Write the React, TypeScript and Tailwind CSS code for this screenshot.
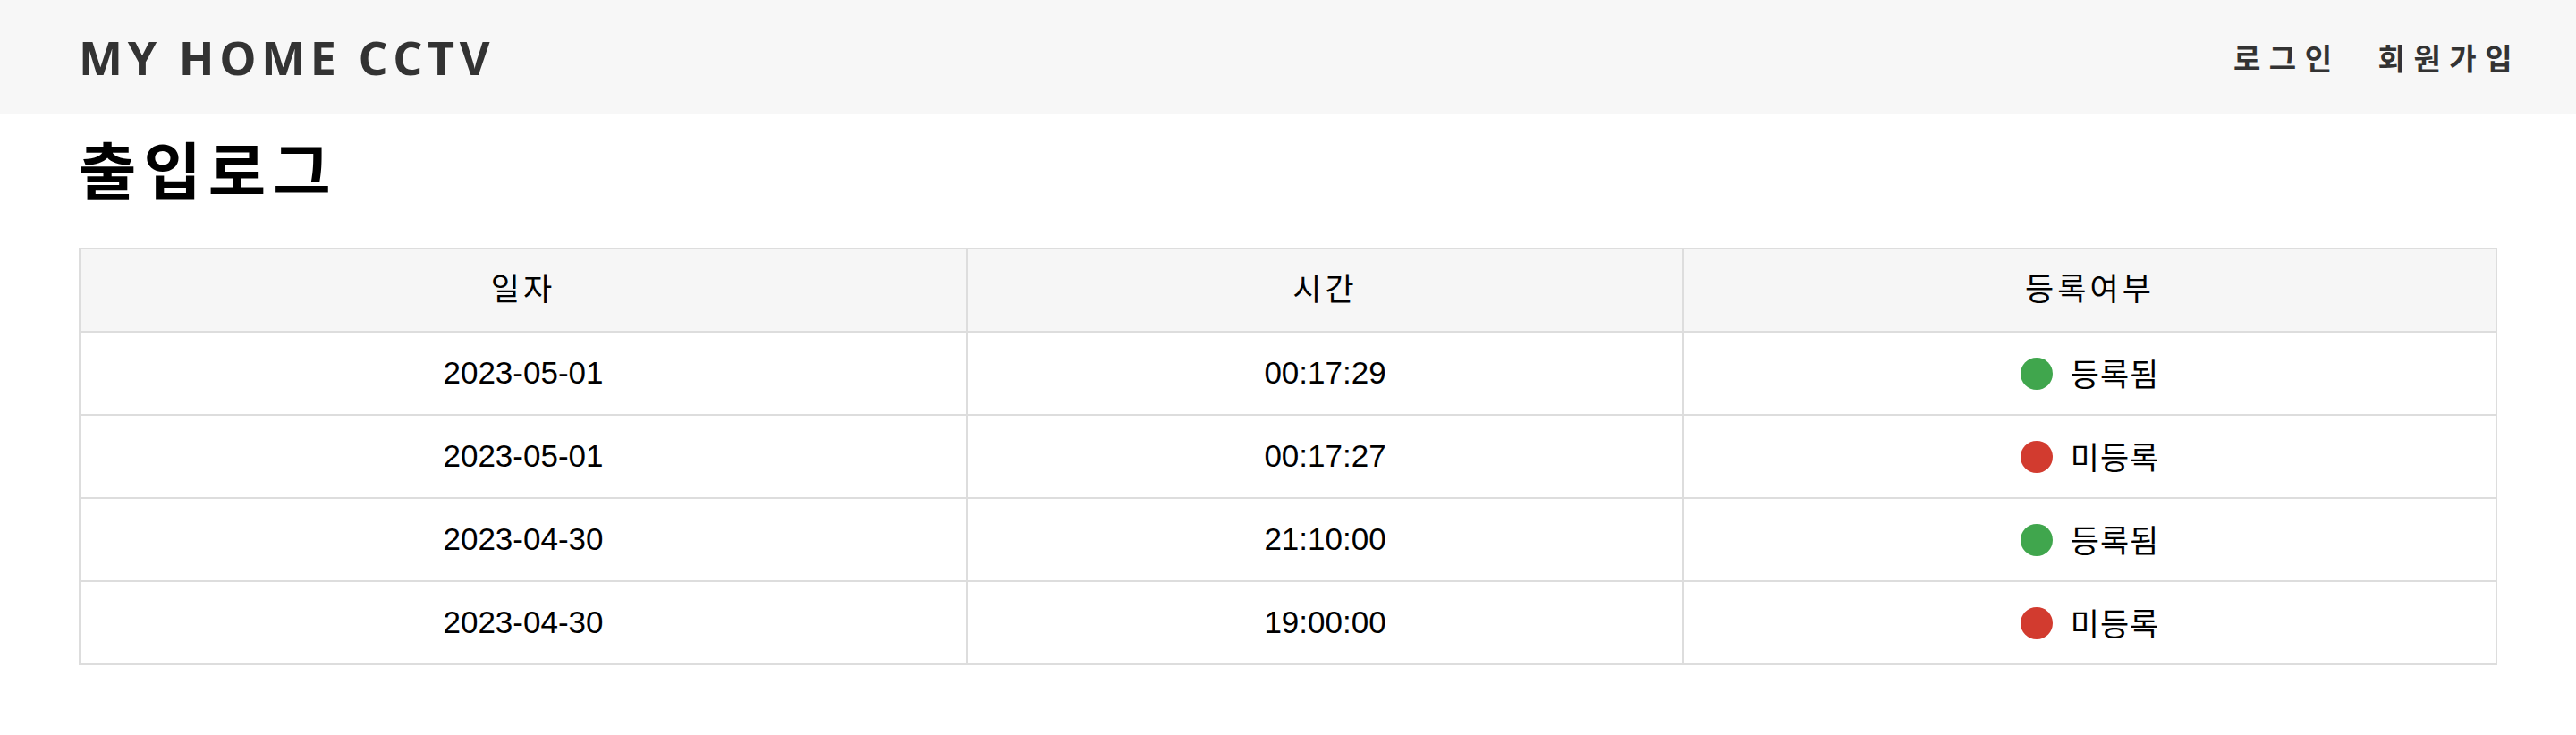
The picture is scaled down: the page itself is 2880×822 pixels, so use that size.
import React from 'react';

type Log = { date: string; time: string; registered: boolean };

const logs: Log[] = [
  { date: '2023-05-01', time: '00:17:29', registered: true },
  { date: '2023-05-01', time: '00:17:27', registered: false },
  { date: '2023-04-30', time: '21:10:00', registered: true },
  { date: '2023-04-30', time: '19:00:00', registered: false },
];

const bodyFont = "font-['Liberation_Sans','Noto_Sans_CJK_KR',sans-serif]";

export default function App() {
  return (
    <div className="min-h-screen bg-white">
      <header className="h-[128px] bg-[#f7f7f7] flex items-center justify-between pl-[88px] pr-[62px]">
        <h1 className="font-['Open_Sans','Noto_Sans_CJK_KR',sans-serif] font-bold text-[52px] leading-none tracking-[5.6px] text-[#333]">
          MY HOME CCTV
        </h1>
        <nav className="flex items-center gap-[42px] font-['Noto_Sans_CJK_KR',sans-serif] font-bold text-[33px] tracking-[9.5px] text-[#333]">
          <a href="#" className="leading-none">로그인</a>
          <a href="#" className="leading-none">회원가입</a>
        </nav>
      </header>

      <main className="px-[88px]">
        <h2 className="mt-[18px] mb-[47px] font-['Noto_Sans_CJK_KR',sans-serif] font-bold text-[70px] leading-[84px] tracking-[8px] text-black">
          출입로그
        </h2>

        <table className={`w-full table-fixed border-collapse text-[35px] text-black ${bodyFont}`}>
          <colgroup>
            <col className="w-[992px]" />
            <col className="w-[801px]" />
            <col />
          </colgroup>
          <thead>
            <tr className="h-[93px] bg-[#f6f6f6]">
              <th className="border-2 border-[#dddddd] font-normal tracking-[4px]">일자</th>
              <th className="border-2 border-[#dddddd] font-normal tracking-[4px]">시간</th>
              <th className="border-2 border-[#dddddd] font-normal tracking-[4px]">등록여부</th>
            </tr>
          </thead>
          <tbody>
            {logs.map((log, i) => (
              <tr key={i} className="h-[93px]">
                <td className="border-2 border-[#dddddd] text-center">{log.date}</td>
                <td className="border-2 border-[#dddddd] text-center">{log.time}</td>
                <td className="border-2 border-[#dddddd]">
                  <div className="flex items-center justify-center gap-[20px]">
                    <span
                      className={`w-[36px] h-[36px] rounded-full ${
                        log.registered ? 'bg-[#40a64d]' : 'bg-[#d23b2f]'
                      }`}
                    />
                    <span className="font-['Noto_Sans_CJK_KR',sans-serif] tracking-[1px]">
                      {log.registered ? '등록됨' : '미등록'}
                    </span>
                  </div>
                </td>
              </tr>
            ))}
          </tbody>
        </table>
      </main>
    </div>
  );
}
